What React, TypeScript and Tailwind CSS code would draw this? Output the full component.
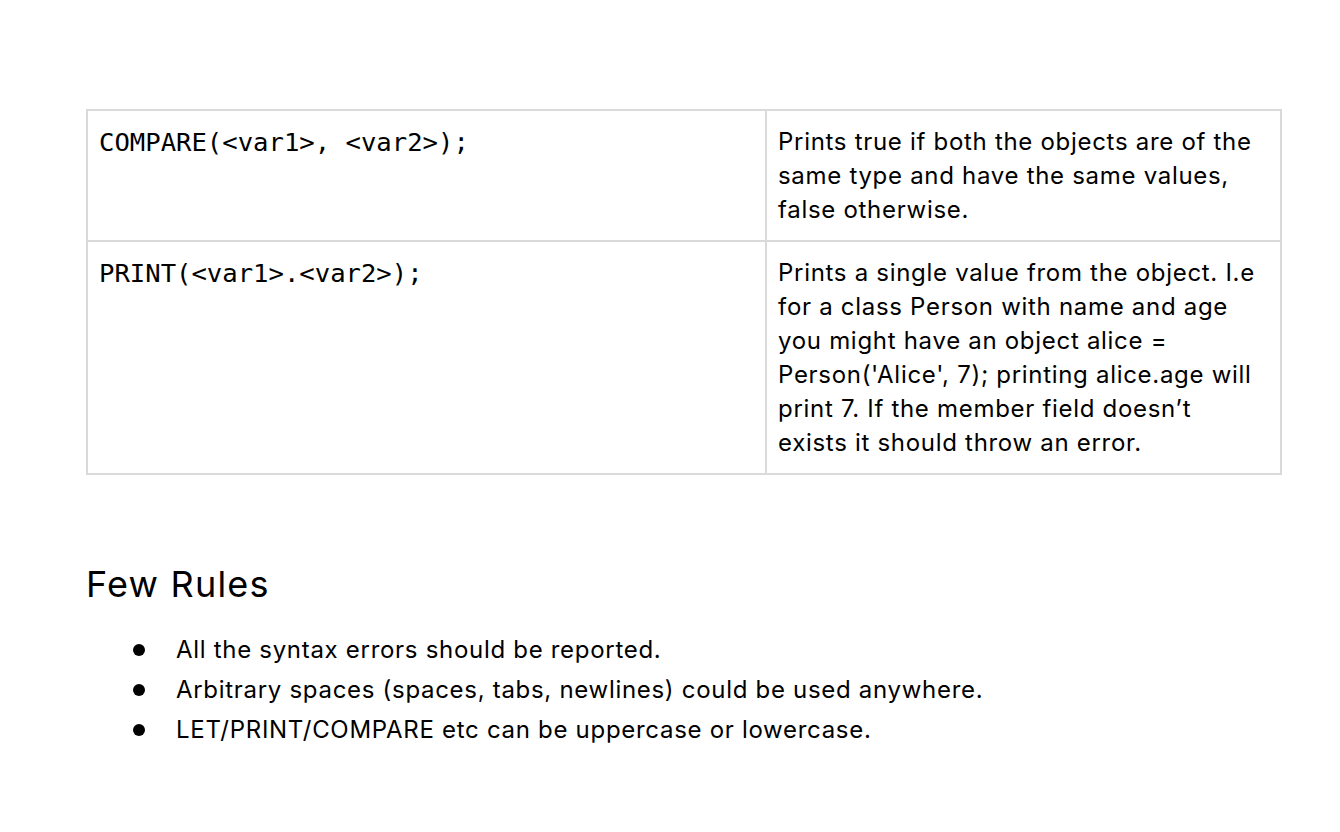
import React from 'react';

const rows = [
  {
    code: 'COMPARE(<var1>, <var2>);',
    lines: [
      'Prints true if both the objects are of the',
      'same type and have the same values,',
      'false otherwise.',
    ],
  },
  {
    code: 'PRINT(<var1>.<var2>);',
    lines: [
      'Prints a single value from the object. I.e',
      'for a class Person with name and age',
      'you might have an object alice =',
      "Person('Alice', 7); printing alice.age will",
      'print 7. If the member field doesn\u2019t',
      'exists it should throw an error.',
    ],
  },
];

const rules = [
  'All the syntax errors should be reported.',
  'Arbitrary spaces (spaces, tabs, newlines) could be used anywhere.',
  'LET/PRINT/COMPARE etc can be uppercase or lowercase.',
];

export default function App() {
  return (
    <div className="min-h-[832px] w-full bg-white pl-[86px] pt-[109px] text-black [font-family:Inter,'Liberation_Sans',sans-serif]">
      <table className="w-[1194px] table-fixed border-collapse">
        <colgroup>
          <col className="w-[679px]" />
          <col className="w-[515px]" />
        </colgroup>
        <tbody>
          {rows.map((row, i) => (
            <tr key={i}>
              <td className="border-2 border-[#dadada] px-[11px] pt-[14px] pb-[13px] align-top text-[25.6px] leading-[34px] [font-family:'DejaVu_Sans_Mono',monospace]">
                <span className="whitespace-pre">{row.code}</span>
              </td>
              <td className="border-2 border-[#dadada] pl-[11px] pr-[4px] pt-[14px] pb-[13px] align-top text-[24px] leading-[34px] tracking-[0.7px]">
                {row.lines.map((line, j) => (
                  <div key={j} className="whitespace-nowrap">
                    {line}
                  </div>
                ))}
              </td>
            </tr>
          ))}
        </tbody>
      </table>

      <h2 className="mt-[87px] text-[36px] leading-[44px] font-normal tracking-[1.2px]">Few Rules</h2>

      <ul className="mt-[24px] pl-[47px]">
        {rules.map((rule, i) => (
          <li key={i} className="flex items-center text-[24px] leading-[40px] tracking-[0.7px]">
            <span className="mr-[31px] h-[12px] w-[12px] shrink-0 rounded-full bg-black" />
            {rule}
          </li>
        ))}
      </ul>
    </div>
  );
}
